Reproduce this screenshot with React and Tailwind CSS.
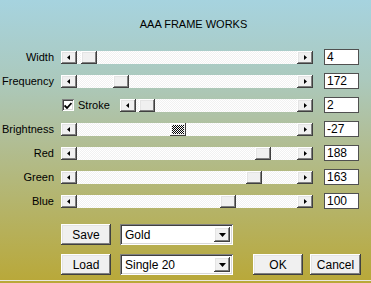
const raised =
    "bg-[#f0f0f0] shadow-[inset_-1px_-1px_#404040,inset_1px_1px_#ffffff,inset_-2px_-2px_#808080,inset_2px_2px_#e4e4e4]";
const sunken =
    "bg-white shadow-[inset_1px_1px_#808080,inset_-1px_-1px_#ffffff,inset_2px_2px_#404040,inset_-2px_-2px_#d8d8d8]";

const Arrow = ({ dir }) => (
    <div className={`w-[16px] h-[13px] shrink-0 flex items-center justify-center ${raised}`}>
        <svg width="4" height="5" viewBox="0 0 4 5">
            {dir === "left" ? <path d="M3 0 L0 2.5 L3 5 Z" fill="#000" /> : <path d="M1 0 L4 2.5 L1 5 Z" fill="#000" />}
        </svg>
    </div>
);

const Slider = ({ offset, width, focused }) => (
    <div className="flex h-[13px]" style={{ width }}>
        <Arrow dir="left" />
        <div className="flex-1 flex bg-[repeating-conic-gradient(#f1f1f1_0_25%,#ffffff_0_50%)] bg-[length:2px_2px]">
            <div className="shrink-0" style={{ width: offset }} />
            {focused ? (
                <div className="w-[16px] h-[13px] shrink-0 p-[2px] bg-[#f0f0f0] shadow-[inset_-1px_-1px_#404040,inset_1px_1px_#ffffff]">
                    <div className="w-full h-full bg-[repeating-conic-gradient(#000_0_25%,#fff_0_50%)] bg-[length:2px_2px]" />
                </div>
            ) : (
                <div className={`w-[16px] h-[13px] shrink-0 ${raised}`} />
            )}
        </div>
        <Arrow dir="right" />
    </div>
);

const ValueBox = ({ value }) => (
    <div className="ml-[11px] w-[35px] h-[16px] bg-white border border-[#505050] pl-[2px] leading-[14px] text-[12px]">
        {value}
    </div>
);

const Row = ({ label, offset, value, focused }) => (
    <div className="flex items-center h-[24px]">
        <div className="w-[54px] text-right">{label}</div>
        <div className="w-[7px]" />
        <Slider offset={offset} width={252} focused={focused} />
        <ValueBox value={value} />
    </div>
);

const Combo = ({ text }) => (
    <div className={`w-[113px] h-[21px] flex items-center pl-[5px] pr-[3px] ${sunken}`}>
        <span className="flex-1 text-[12px]">{text}</span>
        <div className={`w-[16px] h-[15px] flex items-center justify-center ${raised}`}>
            <svg width="7" height="4" viewBox="0 0 7 4">
                <path d="M0 0 L7 0 L3.5 4 Z" fill="#000" />
            </svg>
        </div>
    </div>
);

const Button = ({ label, w = "w-[50px]" }) => (
    <div className={`${w} h-[21px] flex items-center justify-center text-[12px] ${raised}`}>{label}</div>
);

export default function App() {
    return (
        <div
            className="w-[371px] h-[283px] relative overflow-hidden text-[11px] text-black bg-[linear-gradient(to_bottom,#a6d3df_0%,#abc9bd_28%,#b0c09e_45%,#b4b56f_70%,#b9a838_100%)]"
            style={{ fontFamily: '"Liberation Sans", Arial, sans-serif' }}
        >
            <div className="pt-[18px] h-[45px] text-center text-[11px] leading-[13px] pl-[16px]">AAA FRAME WORKS</div>

            <Row label="Width" offset={4} value="4" />
            <Row label="Frequency" offset={36} value="172" />
            <div className="flex items-center h-[24px]">
                <div className="w-[62px]" />
                <div className={`w-[12px] h-[12px] flex items-center justify-center ${sunken}`}>
                    <svg width="8" height="7" viewBox="0 0 8 7">
                        <path d="M0.5 3.5 L3 6 L7.5 1" stroke="#000" strokeWidth="1.8" fill="none" />
                    </svg>
                </div>
                <div className="ml-[4px] w-[42px]">Stroke</div>
                <Slider offset={3} width={193} />
                <ValueBox value="2" />
            </div>
            <Row label="Brightness" offset={93} value="-27" focused />
            <Row label="Red" offset={178} value="188" />
            <Row label="Green" offset={169} value="163" />
            <Row label="Blue" offset={143} value="100" />

            <div className="pl-[61px] pt-[11px] flex flex-col gap-[9px]">
                <div className="flex items-center gap-[9px]">
                    <Button label="Save" />
                    <Combo text="Gold" />
                </div>
                <div className="flex items-center">
                    <Button label="Load" />
                    <div className="w-[9px]" />
                    <Combo text="Single 20" />
                    <div className="w-[20px]" />
                    <Button label="OK" />
                    <div className="w-[7px]" />
                    <Button label="Cancel" w="w-[51px]" />
                </div>
            </div>
            <div className="absolute left-0 right-0 top-[280px] h-px bg-[#e8e8e0]" />
        </div>
    );
}
